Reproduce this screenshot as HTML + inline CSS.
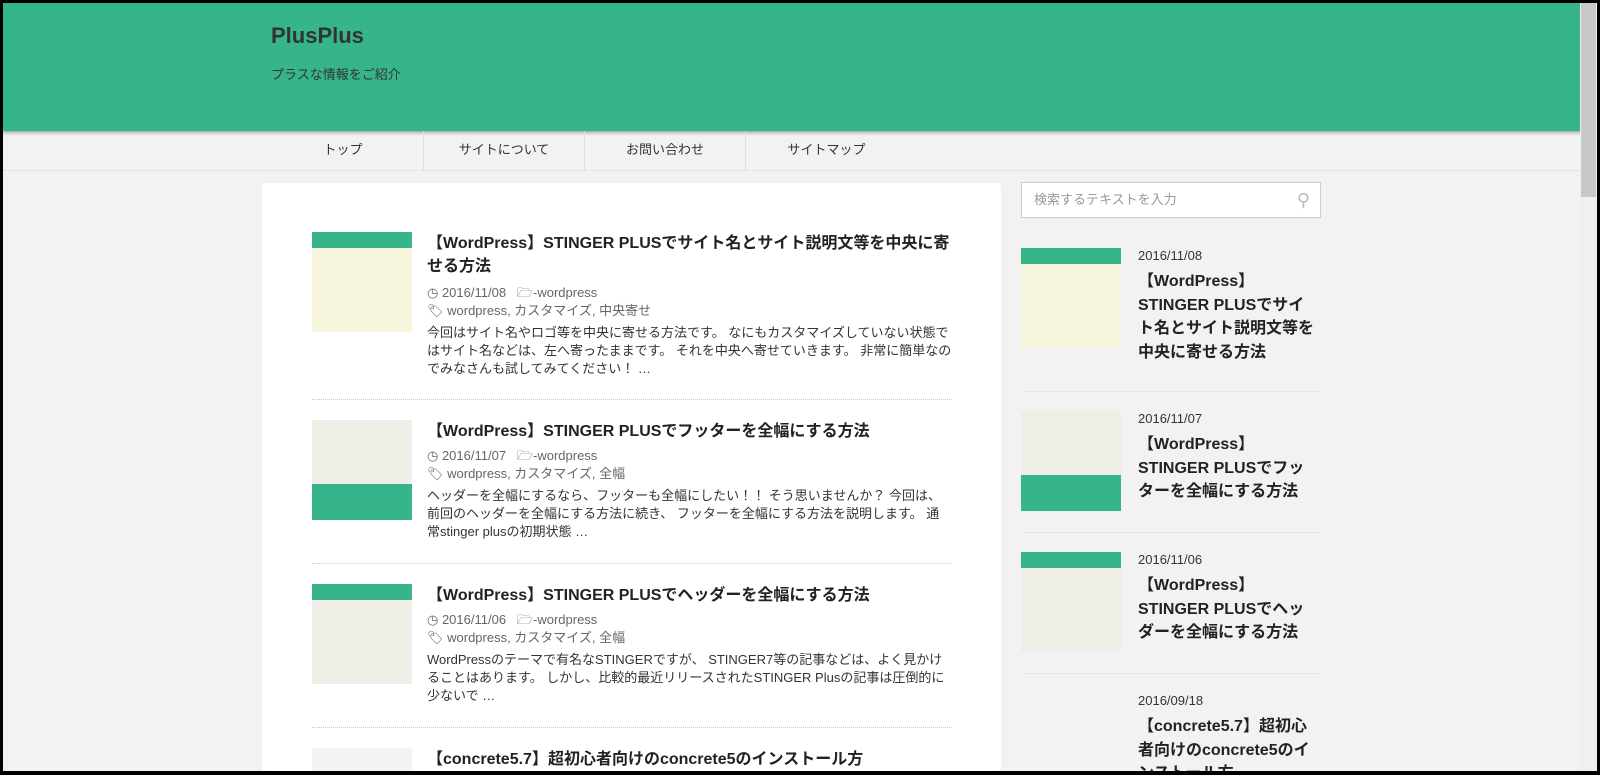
<!DOCTYPE html>
<html><head><meta charset="utf-8"><style>
*{margin:0;padding:0;box-sizing:border-box}
body{width:1600px;height:775px;overflow:hidden;background:#000;font-family:"Liberation Sans","Noto Sans CJK JP",sans-serif;color:#333;position:relative}
#page{position:absolute;left:3px;top:3px;width:1580px;height:768px;background:#f2f2f2;overflow:hidden}
#hdr{position:absolute;left:0;top:0;width:1580px;height:128px;background:#37b58a;box-shadow:0 2px 3px rgba(0,0,0,.3)}
#hdr h1{position:absolute;left:268px;top:20px;font-size:22px;font-weight:bold;color:#333}
#hdr p{position:absolute;left:268px;top:61px;font-size:13px;color:#333}
#nav{position:absolute;left:0;top:128px;width:1580px;height:40px;border-bottom:1px solid #e2e2e2}
#nav div{position:absolute;top:0;height:40px;line-height:38px;text-align:center;font-size:13px;color:#333;border-right:1px solid #ddd}
#nav div.l{border-right:none}
#main{position:absolute;left:259px;top:180px;width:739px;height:588px;background:#fff;border-radius:3px;overflow:hidden}
.post{position:absolute;left:50px;width:640px}
.post .th{position:absolute;left:0;top:0;width:100px;height:100px}
.post h2{position:absolute;left:115px;top:0;width:525px;font-size:16px;line-height:23px;font-weight:bold;color:#222}
.meta{position:absolute;left:115px;font-size:13px;line-height:18px;color:#666}
.ex{position:absolute;left:115px;width:525px;font-size:13px;line-height:18px;color:#333}
.sep{position:absolute;left:50px;width:640px;border-top:1px dotted #ccc}
#search{position:absolute;left:1018px;top:179px;width:300px;height:36px;background:#fff;border:1px solid #ccc;font-size:13px;color:#999;line-height:34px;padding-left:12px}
.side{position:absolute;left:1018px;width:300px}
.side .th{position:absolute;left:0;top:0;width:100px;height:100px}
.side .d{position:absolute;left:117px;top:0;font-size:13px;color:#333}
.side h3{position:absolute;left:117px;top:22px;width:180px;font-size:16px;line-height:23.5px;font-weight:bold;color:#222}
.ssep{position:absolute;left:1021px;width:296px;border-top:1px solid #e4e4e4}
#sb{position:absolute;left:1580px;top:3px;width:17px;height:768px;background:#f0f0f0}
#sb div{position:absolute;left:1px;top:0;width:15px;height:194px;background:#c8c8c8}
.g{background:#37b58a}
</style></head><body>
<div id="page">
<div id="hdr"><h1>PlusPlus</h1><p>プラスな情報をご紹介</p></div>
<div id="nav">
<div style="left:260px;width:161px">トップ</div>
<div style="left:421px;width:161px">サイトについて</div>
<div style="left:582px;width:161px">お問い合わせ</div>
<div class="l" style="left:743px;width:161px">サイトマップ</div>
</div>
<div id="main">
<div class="post" style="top:49px">
<div class="th" style="background:#f7f6dc"><div class="g" style="height:16px"></div></div>
<h2>【WordPress】STINGER PLUSでサイト名とサイト説明文等を中央に寄せる方法</h2>
<div class="meta" style="top:52px">◷ 2016/11/08 &nbsp; 🗁-wordpress</div>
<div class="meta" style="top:70px">🏷 wordpress, カスタマイズ, 中央寄せ</div>
<div class="ex" style="top:92px">今回はサイト名やロゴ等を中央に寄せる方法です。 なにもカスタマイズしていない状態ではサイト名などは、左へ寄ったままです。 それを中央へ寄せていきます。 非常に簡単なのでみなさんも試してみてください！ …</div>
</div>
<div class="sep" style="top:216px"></div>
<div class="post" style="top:237px">
<div class="th" style="background:#eeede6"><div class="g" style="position:absolute;top:64px;width:100px;height:36px"></div></div>
<h2>【WordPress】STINGER PLUSでフッターを全幅にする方法</h2>
<div class="meta" style="top:27px">◷ 2016/11/07 &nbsp; 🗁-wordpress</div>
<div class="meta" style="top:45px">🏷 wordpress, カスタマイズ, 全幅</div>
<div class="ex" style="top:67px">ヘッダーを全幅にするなら、フッターも全幅にしたい！！ そう思いませんか？ 今回は、前回のヘッダーを全幅にする方法に続き、 フッターを全幅にする方法を説明します。 通常stinger plusの初期状態 …</div>
</div>
<div class="sep" style="top:380px"></div>
<div class="post" style="top:401px">
<div class="th" style="background:#eeede6"><div class="g" style="height:16px"></div></div>
<h2>【WordPress】STINGER PLUSでヘッダーを全幅にする方法</h2>
<div class="meta" style="top:27px">◷ 2016/11/06 &nbsp; 🗁-wordpress</div>
<div class="meta" style="top:45px">🏷 wordpress, カスタマイズ, 全幅</div>
<div class="ex" style="top:67px">WordPressのテーマで有名なSTINGERですが、 STINGER7等の記事などは、よく見かけることはあります。 しかし、比較的最近リリースされたSTINGER Plusの記事は圧倒的に少ないで …</div>
</div>
<div class="sep" style="top:544px"></div>
<div class="post" style="top:565px">
<div class="th" style="background:#f3f3f3"></div>
<h2>【concrete5.7】超初心者向けのconcrete5のインストール方</h2>
</div>
</div>
<div id="search">検索するテキストを入力<span style="position:absolute;right:10px;top:0;color:#bbb;font-size:18px">⚲</span></div>
<div class="side" style="top:245px"><div class="th" style="background:#f7f6dc"><div class="g" style="height:16px"></div></div><div class="d">2016/11/08</div><h3>【WordPress】STINGER PLUSでサイト名とサイト説明文等を中央に寄せる方法</h3></div>
<div class="ssep" style="top:388px"></div>
<div class="side" style="top:408px"><div class="th" style="background:#eeede6"><div class="g" style="position:absolute;top:64px;width:100px;height:36px"></div></div><div class="d">2016/11/07</div><h3>【WordPress】STINGER PLUSでフッターを全幅にする方法</h3></div>
<div class="ssep" style="top:529px"></div>
<div class="side" style="top:549px"><div class="th" style="background:#eeede6"><div class="g" style="height:16px"></div></div><div class="d">2016/11/06</div><h3>【WordPress】STINGER PLUSでヘッダーを全幅にする方法</h3></div>
<div class="ssep" style="top:670px"></div>
<div class="side" style="top:690px"><div class="th" style="background:#f3f3f3"></div><div class="d">2016/09/18</div><h3>【concrete5.7】超初心者向けのconcrete5のインストール方</h3></div>
</div>
<div id="sb"><div></div></div>
</body></html>
